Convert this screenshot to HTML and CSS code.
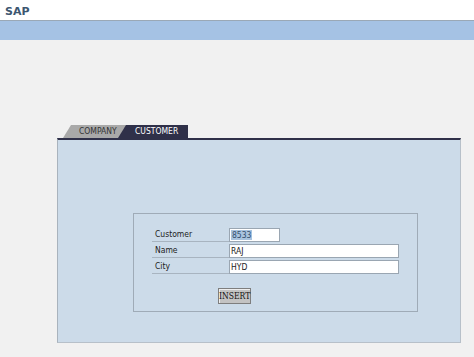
FILE: index.html
```html
<!DOCTYPE html>
<html>
<head>
<meta charset="utf-8">
<link rel="stylesheet" href="styles.css">
</head>
<body>
<div class="header"><span class="logo">SAP</span></div>
<div class="bluebar"></div>
<div class="content">
  <div class="tabs">
    <div class="tab tab-company">COMPANY</div>
    <div class="tab tab-customer">CUSTOMER</div>
  </div>
  <div class="panel">
    <div class="group">
      <div class="form">
        <div class="label">Customer</div>
        <div class="field"><div class="input short"><span class="sel">8533</span></div></div>
        <div class="label">Name</div>
        <div class="field"><div class="input">RAJ</div></div>
        <div class="label">City</div>
        <div class="field"><div class="input">HYD</div></div>
      </div>
      <button class="btn">INSERT</button>
    </div>
  </div>
</div>
</body>
</html>
```
FILE: styles.css
```css
html, body {
  margin: 0;
  padding: 0;
}
body {
  background: #f1f1f1;
  font-family: "DejaVu Sans Condensed", "DejaVu Sans", sans-serif;
  font-size: 8.5px;
  color: #222;
  width: 474px;
  height: 357px;
  overflow: hidden;
}
.header {
  height: 21px;
  background: #fff;
  border-bottom: 1px solid #9aa8b6;
  box-sizing: border-box;
  display: flex;
  align-items: center;
  padding: 2px 0 0 5px;
}
.logo {
  font-family: "DejaVu Sans", sans-serif;
  font-weight: bold;
  font-size: 11px;
  color: #3c5670;
}
.bluebar {
  height: 19px;
  background: #a5c2e4;
}
.content {
  padding: 85px 13px 0 57px;
}
.tabs {
  display: flex;
  height: 13px;
  padding-left: 6px;
}
.tab {
  height: 13px;
  line-height: 13px;
  box-sizing: border-box;
  clip-path: polygon(8px 0, 100% 0, 100% 100%, 0 100%);
}
.tab-company {
  background: #a9a9a9;
  color: #333;
  width: 63px;
  padding-left: 16px;
}
.tab-customer {
  background: #2f3049;
  color: #fff;
  width: 70px;
  margin-left: -8px;
  padding-left: 17px;
}
.panel {
  width: 404px;
  height: 205px;
  box-sizing: border-box;
  background: #ccdbe9;
  border-top: 2px solid #2f3049;
  border-left: 1px solid #a9b3bd;
  border-right: 1px solid #b7c0c9;
  border-bottom: 1px solid #b7c0c9;
  padding: 73px 0 0 75px;
}
.group {
  width: 285px;
  height: 99px;
  box-sizing: border-box;
  border: 1px solid #9fabb7;
  padding: 14px 0 0 18px;
}
.form {
  display: grid;
  grid-template-columns: 77px 170px;
  row-gap: 2px;
}
.label {
  height: 13px;
  line-height: 13px;
  padding-left: 3px;
  border-bottom: 1px solid #a8b4c0;
}
.field {
  height: 14px;
}
.input {
  box-sizing: border-box;
  width: 170px;
  height: 14px;
  line-height: 12px;
  border: 1px solid #9aa6b2;
  background: #fff;
  padding: 0 1px;
  color: #222;
}
.input.short {
  width: 51px;
}
.sel {
  background: #a9c3de;
  color: #34506e;
  padding: 0 1px;
}
.btn {
  display: block;
  margin: 14px 0 0 66px;
  width: 33px;
  height: 16px;
  padding: 0;
  background: #c3c3c3;
  border: 1px solid #7e7e7e;
  box-shadow: inset 1px 1px 0 #eee;
  font-family: "DejaVu Serif Condensed", "DejaVu Serif", serif;
  font-size: 8.5px;
  color: #111;
}
```
